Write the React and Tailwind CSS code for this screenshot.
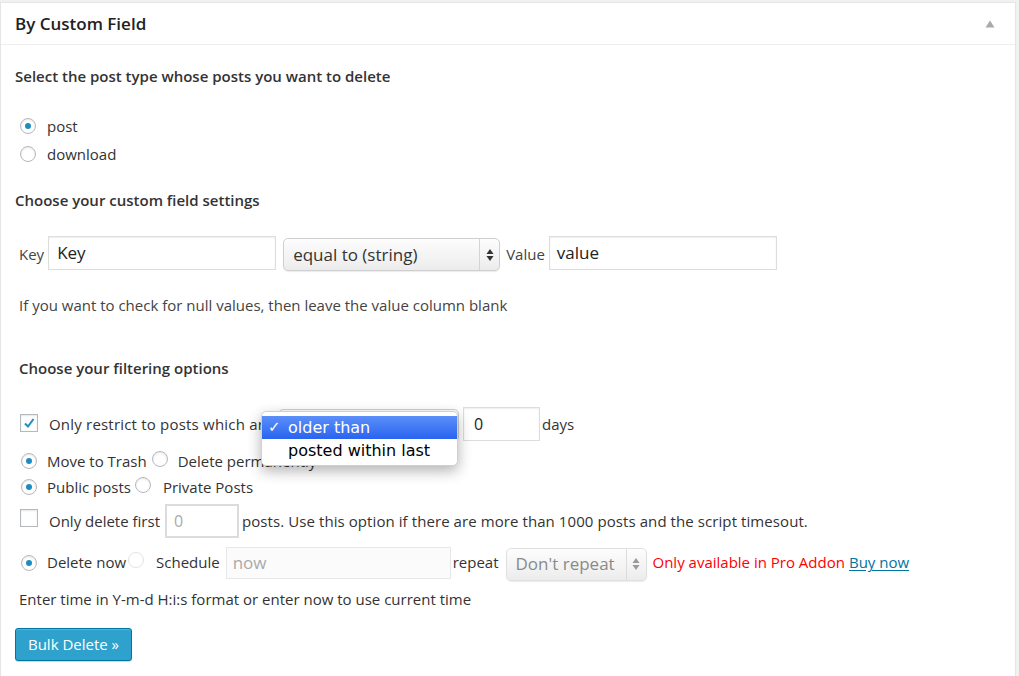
import React from "react";

const font = { fontFamily: '"Open Sans", "Liberation Sans", sans-serif' };

function Radio({ checked, faded }) {
  return (
    <span
      className={`inline-flex items-center justify-center w-[16px] h-[16px] rounded-full border shrink-0 bg-white ${
        faded ? "border-[#e4e4e4]" : "border-[#b4b9be] shadow-[inset_0_1px_2px_rgba(0,0,0,0.1)]"
      }`}
    >
      {checked && <span className="w-[6px] h-[6px] rounded-full bg-[#1e8cbe]" />}
    </span>
  );
}

function Checkbox({ checked }) {
  return (
    <span className="inline-flex items-center justify-center w-[18px] h-[18px] border border-[#b4b9be] bg-white shadow-[inset_0_1px_2px_rgba(0,0,0,0.1)] shrink-0">
      {checked && (
        <svg width="14" height="14" viewBox="0 0 14 14">
          <path d="M3 7.5 L6 10.5 L11.5 3" fill="none" stroke="#1e8cbe" strokeWidth="2" />
        </svg>
      )}
    </span>
  );
}

function Arrows({ color = "#333" }) {
  return (
    <svg width="8" height="14" viewBox="0 0 8 14">
      <path d="M4 1 L7.5 6 L0.5 6 Z" fill={color} />
      <path d="M4 13 L7.5 8 L0.5 8 Z" fill={color} />
    </svg>
  );
}

function Select({ text, w, disabled }) {
  return (
    <div
      className={`flex items-stretch h-[33px] rounded-[5px] border ${
        disabled ? "border-[#e0e0e0] text-[#8a8a8a]" : "border-[#cfcfcf] text-[#333]"
      } bg-gradient-to-b from-[#fdfdfd] to-[#ececec] shadow-[0_1px_1px_rgba(0,0,0,0.08)] shrink-0`}
      style={{ width: w }}
    >
      <div className="flex-1 flex items-center pl-[9px] text-[17px] whitespace-nowrap">{text}</div>
      <div className={`w-[20px] flex items-center justify-center border-l ${disabled ? "border-[#dcdcdc]" : "border-[#d4d4d4]"}`}>
        <Arrows color={disabled ? "#999" : "#333"} />
      </div>
    </div>
  );
}

export default function App() {
  return (
    <div className="min-h-[676px] bg-[#f1f1f1] pt-[2px] overflow-hidden" style={font}>
      <div className="w-[1016px] min-h-[680px] bg-white border border-[#e5e5e5] text-[#444]">
        <div className="h-[42px] flex items-center justify-between pl-[14px] pr-[20px] border-b border-[#eeeeee]">
          <span className="text-[17px] font-semibold text-[#222]">By Custom Field</span>
          <svg width="10" height="8" viewBox="0 0 10 8">
            <path d="M5 0.5 L9.5 7.5 L0.5 7.5 Z" fill="#aaa" />
          </svg>
        </div>

        <div className="pl-[14px]">
          <div className="mt-[21px] h-[20px] flex items-center text-[15px] font-semibold text-[#333]">
            Select the post type whose posts you want to delete
          </div>
          <div className="mt-[26px] pl-[5px] text-[15px] text-[#333]">
            <label className="h-[28px] flex items-center gap-[11px]">
              <Radio checked /> post
            </label>
            <label className="h-[28px] flex items-center gap-[11px]">
              <Radio /> download
            </label>
          </div>

          <div className="mt-[22px] h-[20px] flex items-center text-[15px] font-semibold text-[#333]">
            Choose your custom field settings
          </div>
        </div>

        <div className="pl-[18px] text-[#444]">
          <div className="mt-[26px] flex items-center h-[34px] text-[15px]">
            <span className="mr-[4px] pt-[3px]">Key</span>
            <div className="w-[228px] h-[34px] border border-[#dddddd] shadow-[inset_0_1px_2px_rgba(0,0,0,0.07)] flex items-center pl-[8px] text-[17px] text-[#222]">
              Key
            </div>
            <div className="ml-[7px] mt-[3px]">
              <Select text="equal to (string)" w={217} />
            </div>
            <span className="ml-[6px] mr-[4px] pt-[3px]">Value</span>
            <div className="w-[228px] h-[34px] border border-[#dddddd] shadow-[inset_0_1px_2px_rgba(0,0,0,0.07)] flex items-center pl-[7px] text-[17px] text-[#222]">
              value
            </div>
          </div>

          <div className="mt-[25px] h-[20px] flex items-center text-[15px]">
            If you want to check for null values, then leave the value column blank
          </div>

          <div className="mt-[43px] h-[20px] flex items-center text-[15px] font-semibold text-[#333]">
            Choose your filtering options
          </div>

          <div className="mt-[29px] relative flex items-center h-[34px] text-[15px] text-[#333]">
            <span className="ml-[1px]">
              <Checkbox checked />
            </span>
            <span className="ml-[11px] whitespace-nowrap w-[229px] tracking-[0.2px]">Only restrict to posts which are</span>
            <div className="w-[181px] h-[33px] rounded-[5px] border border-[#cfcfcf] bg-gradient-to-b from-[#fdfdfd] to-[#ececec] mt-[2px]" />
            <div className="ml-[4px] w-[77px] h-[34px] border border-[#dddddd] shadow-[inset_0_1px_2px_rgba(0,0,0,0.07)] flex items-center pl-[10px] text-[16px] text-[#222]">
              0
            </div>
            <span className="ml-[2px]">days</span>

            <div
              className="absolute left-[242px] top-[4px] w-[197px] h-[55px] bg-white rounded-[5px] border border-[#d0d0d0] shadow-[0_5px_14px_rgba(0,0,0,0.3)] z-10 pt-[4px] text-black"
              style={{ fontFamily: '"DejaVu Sans", "Liberation Sans", sans-serif' }}
            >
              <div className="h-[23px] flex items-center bg-gradient-to-b from-[#5b8ff9] to-[#2a63ef] text-white">
                <span className="w-[26px] pl-[6px] text-[15px] font-bold">✓</span>
                <span className="text-[16px]">older than</span>
              </div>
              <div className="h-[23px] flex items-center pl-[26px] text-[16px]">posted within last</div>
            </div>
          </div>

          <div className="mt-[7px] pl-[2px] flex items-center h-[26px] text-[15px] text-[#333]">
            <Radio checked />
            <span className="ml-[10px]">Move to Trash</span>
            <span className="ml-[5px]"><Radio /></span>
            <span className="ml-[10px]">Delete permanently</span>
          </div>
          <div className="pl-[2px] flex items-center h-[26px] text-[15px] text-[#333]">
            <Radio checked />
            <span className="ml-[10px]">Public posts</span>
            <span className="ml-[4px]"><Radio /></span>
            <span className="ml-[12px]">Private Posts</span>
          </div>

          <div className="mt-[4px] flex items-center h-[34px] text-[15px] text-[#333]">
            <span className="ml-[1px]"><Checkbox /></span>
            <span className="ml-[11px]">Only delete first</span>
            <div className="ml-[5px] w-[74px] h-[34px] border-2 border-[#dcdcdc] flex items-center pl-[7px] text-[16px] text-[#aaa]">
              0
            </div>
            <span className="ml-[3px] whitespace-nowrap tracking-[0.08px]">
              posts. Use this option if there are more than 1000 posts and the script timesout.
            </span>
          </div>

          <div className="mt-[8px] pl-[2px] flex items-center h-[33px] text-[15px] text-[#333]">
            <Radio checked />
            <span className="ml-[10px]">Delete now</span>
            <span className="ml-[2px]"><Radio faded /></span>
            <span className="ml-[12px]">Schedule</span>
            <div className="ml-[6px] w-[225px] h-[32px] border border-[#e8e8e8] bg-[#fbfbfb] flex items-center pl-[6px] text-[17px] text-[#aaa]">
              now
            </div>
            <span className="ml-[2px]">repeat</span>
            <div className="ml-[7px] mt-[3px]">
              <Select text="Don't repeat" w={141} disabled />
            </div>
            <span className="ml-[6px] text-[#ff0000]">Only available in Pro Addon</span>
            <span className="ml-[4px] text-[#0074a2] underline underline-offset-2">Buy now</span>
          </div>

          <div className="mt-[10px] h-[20px] flex items-center text-[15px] text-[#333]">
            Enter time in Y-m-d H:i:s format or enter now to use current time
          </div>
        </div>

        <div className="pl-[14px] mt-[19px]">
          <button className="h-[33px] w-[117px] rounded-[3px] bg-[#2ea2cc] border border-[#0074a2] text-white text-[15px] shadow-[inset_0_1px_0_rgba(120,200,230,0.5),0_1px_0_rgba(0,0,0,0.15)]">
            Bulk Delete »
          </button>
        </div>
      </div>
    </div>
  );
}
